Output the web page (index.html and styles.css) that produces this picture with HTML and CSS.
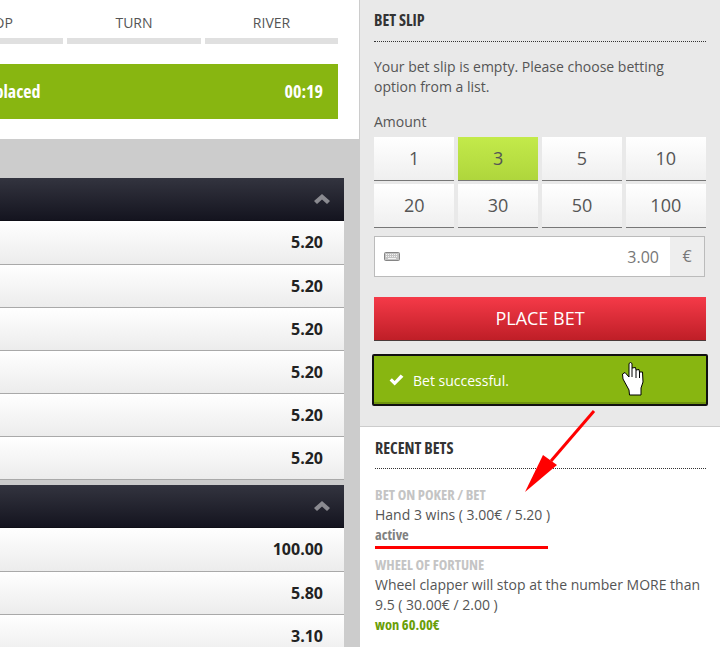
FILE: index.html
```html
<!DOCTYPE html>
<html lang="en">
<head>
    <meta charset="UTF-8">
    <meta name="viewport" content="width=device-width, initial-scale=1.0">
    <title>Bet on Poker</title>
    <link rel="stylesheet" href="styles.css">
</head>
<body>
    <div class="page">
        <div class="game-col">
            <div class="game-top">
                <div class="stages">
                    <div class="stage">FLOP</div>
                    <div class="stage">TURN</div>
                    <div class="stage">RIVER</div>
                </div>
                <div class="status-bar">
                    <span>Bets are placed</span>
                    <span>00:19</span>
                </div>
            </div>
            <div class="odds">
                <div class="odds-group">
                    <div class="odds-head">
                        <svg class="chevron" viewBox="0 0 16 10"><path d="M0 7 L8 0 L16 7 L13 10 L8 5.500 L3 10 Z"/></svg>
                    </div>
                    <div class="odds-row">5.20</div>
                    <div class="odds-row">5.20</div>
                    <div class="odds-row">5.20</div>
                    <div class="odds-row">5.20</div>
                    <div class="odds-row">5.20</div>
                    <div class="odds-row">5.20</div>
                </div>
                <div class="odds-group">
                    <div class="odds-head">
                        <svg class="chevron" viewBox="0 0 16 10"><path d="M0 7 L8 0 L16 7 L13 10 L8 5.500 L3 10 Z"/></svg>
                    </div>
                    <div class="odds-row">100.00</div>
                    <div class="odds-row">5.80</div>
                    <div class="odds-row">3.10</div>
                </div>
            </div>
        </div>

        <div class="side-col">
            <div class="bet-slip">
                <h2 class="side-title">BET SLIP</h2>
                <p class="slip-text">Your bet slip is empty. Please choose betting option from a list.</p>
                <div class="amount-label">Amount</div>
                <div class="amounts">
                    <div class="amount">1</div>
                    <div class="amount selected">3</div>
                    <div class="amount">5</div>
                    <div class="amount">10</div>
                    <div class="amount">20</div>
                    <div class="amount">30</div>
                    <div class="amount">50</div>
                    <div class="amount">100</div>
                </div>
                <div class="stake">
                    <svg class="keyboard" viewBox="0 0 16 9">
                        <rect x="0.500" y="0.500" width="15" height="8" rx="1" fill="#c4c4c4" stroke="#858585"/>
                        <path d="M2 2.500h12M2 4.500h12" stroke="#f4f4f4" stroke-dasharray="1 1"/>
                        <path d="M4 6.500h8" stroke="#f4f4f4"/>
                    </svg>
                    <span class="stake-value">3.00</span>
                    <span class="stake-currency">€</span>
                </div>
                <div class="place-bet">PLACE BET</div>
                <div class="success">
                    <svg class="check" viewBox="0 0 16 13"><path d="M0.500 7 L3 4.500 L6 7.500 L12.500 0.500 L15.500 3 L6 12.500 Z"/></svg>
                    Bet successful.
                </div>
            </div>
            <div class="recent">
                <h2 class="side-title">RECENT BETS</h2>
                <div class="recent-item">
                    <div class="recent-game">BET ON POKER / BET</div>
                    <div class="recent-desc">Hand 3 wins ( 3.00€ / 5.20 )</div>
                    <div class="recent-state">active</div>
                </div>
                <div class="recent-item">
                    <div class="recent-game">WHEEL OF FORTUNE</div>
                    <div class="recent-desc">Wheel clapper will stop at the number MORE than 9.5 ( 30.00€ / 2.00 )</div>
                    <div class="recent-state won">won 60.00€</div>
                </div>
            </div>
        </div>

        <!-- red annotation and cursor drawn over the screenshot -->
        <svg class="annotation" viewBox="0 0 720 647">
            <path d="M594 411 L551 461" stroke="#f00" stroke-width="3" fill="none"/>
            <path d="M525 492 L543 455 L550 460 L557 465 Z" fill="#f00"/>
            <rect x="375" y="546" width="173" height="3" fill="#f00"/>
        </svg>
        <svg class="hand" viewBox="0 0 22 34">
            <path d="M7 1.500 Q8.500 -0.500 10 1.500 L10 6 L13.500 5.500 L14 8 L17 7.500 L17.500 10 L20.500 10 L21 20 L19 26 L19 33 L7.500 33 L7 28 L1 17 L0.500 12 L3 10.500 L7 15 Z" fill="#fff" stroke="#000"/>
            <path d="M10 6 L10 15 M14 8 L14 16 M17.500 10 L17.500 16" stroke="#000" fill="none"/>
        </svg>
    </div>
</body>
</html>
```

FILE: styles.css
```css
* {
    box-sizing: border-box;
}
body {
    margin: 0;
    font-family: "Open Sans", Arial, sans-serif;
    font-size: 14px;
    color: #555;
    overflow: hidden;
}
.page {
    position: relative;
    display: flex;
    width: 720px;
    height: 647px;
    overflow: hidden;
}

/* left column, cut off by the window */
.game-col {
    width: 359px;
    flex-shrink: 0;
    background-color: #ccc;
    overflow: hidden;
}
.game-top {
    width: 430px;
    height: 139px;
    margin-left: -71px;
    padding: 13px 21px 0 0;
    background-color: white;
}
.stages {
    display: grid;
    grid-template-columns: 134px 134px 133px;
    gap: 4px;
}
.stage {
    height: 31px;
    padding-bottom: 6px;
    text-align: center;
    line-height: 20px;
    border-bottom: 6px solid #e0e0e0;
}
.status-bar {
    display: flex;
    justify-content: space-between;
    align-items: center;
    height: 55px;
    margin-top: 20px;
    padding: 0 15px 2px 6px;
    background-color: #88b611;
    color: white;
    font-size: 18px;
    font-weight: 700;
    font-stretch: 75%;
}
.odds {
    width: 430px;
    margin-left: -71px;
    padding: 39px 15px 0 0;
}
.odds-group {
    margin-bottom: 5px;
}
.odds-head {
    display: flex;
    justify-content: flex-end;
    align-items: center;
    height: 43px;
    padding-right: 14px;
    background: linear-gradient(#33343f, #14141f);
    border-bottom: 1px solid #0f0f17;
}
.chevron {
    width: 16px;
    height: 10px;
    fill: #8a8a90;
}
.odds-row {
    height: 43px;
    padding-right: 21px;
    text-align: right;
    line-height: 42px;
    font-size: 16px;
    font-weight: 700;
    color: #222;
    background: linear-gradient(#fff, #ececec);
    border-bottom: 1px solid #a9a9a9;
}
.odds-head + .odds-row {
    height: 44px;
}

/* right column */
.side-col {
    flex: 1;
    display: flex;
    flex-direction: column;
    border-left: 1px solid #ccc;
}
.bet-slip {
    height: 427px;
    padding: 0 14px 0 14px;
    background-color: #e9e9e9;
    border-bottom: 1px solid #ccc;
}
.side-title {
    margin: 0;
    height: 42px;
    padding-top: 9px;
    font-size: 16px;
    line-height: 22px;
    font-weight: 700;
    font-stretch: 75%;
    color: #333;
    border-bottom: 1px dotted #333;
}
.slip-text {
    margin: 15px 0 0;
    line-height: 20px;
}
.amount-label {
    margin-top: 15px;
    line-height: 20px;
}
.amounts {
    display: grid;
    grid-template-columns: repeat(4, 1fr);
    gap: 3px 3.500px;
    margin-top: 5px;
}
.amount {
    height: 44px;
    text-align: center;
    line-height: 42px;
    font-size: 18px;
    background: linear-gradient(#fff, #efefef);
    border-bottom: 1px solid #777;
}
.amount.selected {
    background: linear-gradient(#c3ea4a, #afd63c);
}
.stake {
    display: flex;
    align-items: center;
    width: 331px;
    height: 41px;
    margin-top: 8px;
    padding-left: 9px;
    font-size: 16px;
    background-color: white;
    border: 1px solid #bbb;
}
.keyboard {
    width: 16px;
    height: 9px;
}
.stake-value {
    margin-left: auto;
    padding-right: 11px;
    color: #777;
}
.stake-currency {
    width: 34px;
    height: 100%;
    text-align: center;
    line-height: 39px;
    background-color: #eee;
    color: #777;
}
.place-bet {
    height: 44px;
    margin-top: 20px;
    text-align: center;
    line-height: 42px;
    font-size: 18px;
    color: white;
    background: linear-gradient(#f53a48, #bf1e27);
    border-bottom: 1px solid #4a3a3a;
}
.success {
    display: flex;
    align-items: center;
    gap: 9px;
    height: 52px;
    margin: 13px -2px 0;
    padding-left: 15px;
    font-size: 14px;
    color: white;
    background-color: #88b611;
    border: 2px solid #111;
    border-radius: 2px;
    box-shadow: inset 0 -2px 0 #6f950d;
}
.check {
    width: 15px;
    height: 12px;
    fill: white;
}
.recent {
    flex: 1;
    padding: 0 14px 0 15px;
    background-color: white;
}
.recent .side-title {
    padding-top: 10px;
}
.recent-item {
    margin-top: 10px;
    line-height: 20px;
}
.recent .side-title + .recent-item {
    margin-top: 16px;
}
.recent-game {
    font-size: 14.500px;
    font-weight: 700;
    font-stretch: 75%;
    color: #c4c4c4;
}
.recent-desc {
    color: #555;
}
.recent-state {
    font-size: 14.500px;
    font-weight: 700;
    font-stretch: 75%;
    color: #808080;
}
.recent-state.won {
    color: #6a9e07;
}

/* overlays */
.annotation {
    position: absolute;
    left: 0;
    top: 0;
    width: 720px;
    height: 647px;
    pointer-events: none;
}
.hand {
    position: absolute;
    left: 622px;
    top: 362px;
    width: 22px;
    height: 34px;
}
```
